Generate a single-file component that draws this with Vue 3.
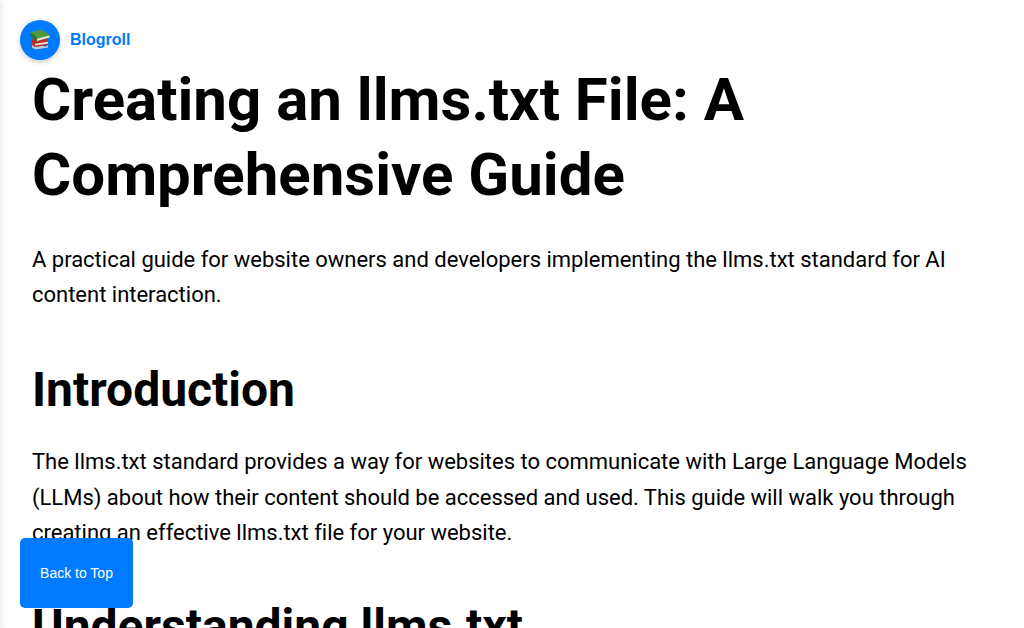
<script setup>
</script>

<template>
  <div class="page">
    <div class="edge"></div>
    <a class="brand">
      <span class="logo">
        <svg class="books" width="24" height="24" viewBox="0 0 24 24">
          <path d="M4 17.5 L18 19.5 L20 18 L20 20.5 L7.5 22.5 L4 20.5 Z" fill="#c9c5d6" />
          <path d="M3.5 12 L16 10.5 L20 12.5 L20 18 L7 20 L3.5 17.5 Z" fill="#b9302a" />
          <path d="M7 16.8 L20 14.8 L20 16.6 L7 18.6 Z" fill="#f0e6dc" />
          <path d="M2.5 5.5 L13 2.5 L21.5 7.5 L21.5 10.5 L9 14 L3 9.5 Z" fill="#4f9a3f" />
          <path d="M9 11.7 L21.5 8.5 L21.5 10.5 L9 14 Z" fill="#e9e4d2" />
          <path d="M2.5 5.5 L3 9.5 L9 14 L9 10.5 Z" fill="#2f6f2e" />
        </svg>
      </span>
      <span class="brand-name">Blogroll</span>
    </a>

    <main class="content">
      <h1>Creating an llms.txt File: A Comprehensive Guide</h1>
      <p>A practical guide for website owners and developers implementing the llms.txt standard for AI content interaction.</p>
      <h2>Introduction</h2>
      <p>The llms.txt standard provides a way for websites to communicate with Large Language Models (LLMs) about how their content should be accessed and used. This guide will walk you through creating an effective llms.txt file for your website.</p>
      <h2>Understanding llms.txt</h2>
    </main>

    <button class="top-btn">Back to Top</button>
  </div>
</template>

<style>
html, body { margin: 0; background: #fff; overflow: hidden; }
</style>

<style scoped>
.page {
  position: relative;
  width: 1024px;
  height: 628px;
  overflow: hidden;
  background: #fff;
  color: #000;
  font-family: Roboto, sans-serif;
}
.edge {
  position: absolute;
  left: -10px;
  top: 0;
  width: 10px;
  height: 100%;
  box-shadow: 0 0 8px rgba(0, 0, 0, 0.15);
}
.brand {
  position: absolute;
  left: 20px;
  top: 20px;
  display: flex;
  align-items: center;
  gap: 10px;
}
.logo {
  width: 40px;
  height: 40px;
  border-radius: 50%;
  background: #007bff;
  box-shadow: 0 2px 5px rgba(0, 0, 0, 0.2);
  display: flex;
  align-items: center;
  justify-content: center;
}
.books {
  margin-top: -2px;
}
.brand-name {
  font-family: "Liberation Sans", Arial, sans-serif;
  font-size: 16px;
  font-weight: 700;
  color: #007bff;
}
.content {
  padding: 62px 32px 0;
}
h1 {
  margin: 0 0 30px;
  font-size: 60px;
  line-height: 75px;
  font-weight: 700;
}
h2 {
  margin: 47px 0 24.3px;
  font-size: 48px;
  line-height: 60px;
  font-weight: 700;
}
p {
  margin: 0;
  font-size: 22px;
  line-height: 35.4px;
  letter-spacing: -0.01px;
}
.top-btn {
  position: absolute;
  left: 20px;
  top: 538px;
  width: 113px;
  height: 70px;
  border: 0;
  border-radius: 5px;
  background: #007bff;
  color: #fff;
  font-family: "Liberation Sans", Arial, sans-serif;
  font-size: 14px;
}
</style>
